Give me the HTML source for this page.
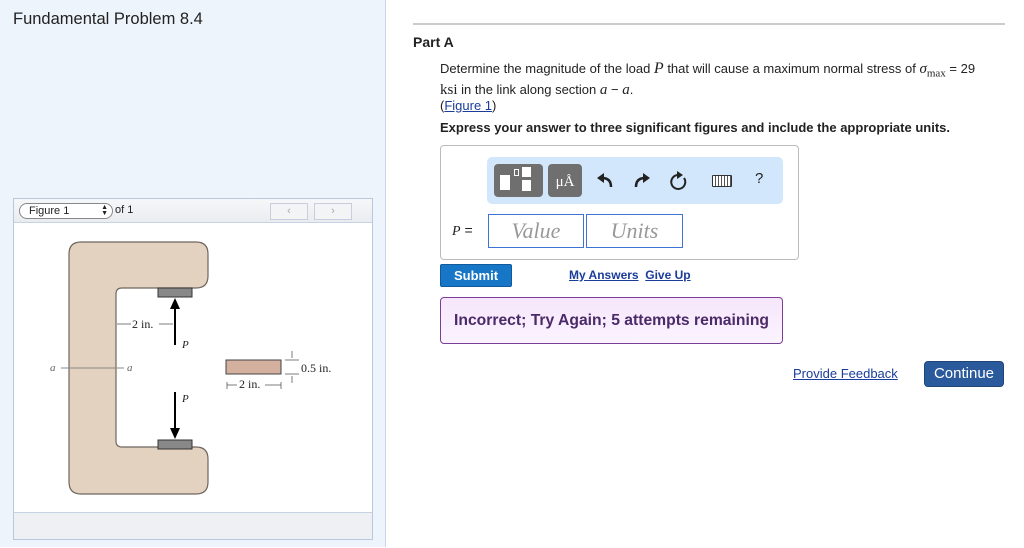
<!DOCTYPE html>
<html><head><meta charset="utf-8"><style>
*{margin:0;padding:0;box-sizing:border-box}
body{width:1024px;height:547px;overflow:hidden;background:#fff;font-family:"Liberation Sans",Arial,sans-serif;position:relative;color:#222}
.left{position:absolute;left:0;top:0;width:386px;height:547px;background:#eef4fc;border-right:1px solid #c8d6e8}
.abs{position:absolute}
a{color:#1a3c9a}
</style></head><body>
<div class="left">
  <div class="abs" style="left:13px;top:10px;font-size:16.5px;color:#222">Fundamental Problem 8.4</div>
  <div class="abs" style="left:13px;top:198px;width:360px;height:342px;border:1px solid #b9c9dd;background:#fff">
    <div class="abs" style="left:0;top:0;width:358px;height:24px;background:linear-gradient(#f6f7f9,#e9ecf0);border-bottom:1px solid #c6d3e2"></div>
    <div class="abs" style="left:5px;top:4px;width:94px;height:16px;border:1px solid #888;border-radius:8px;background:#fff;font-size:11px;padding-left:9px;line-height:14px">Figure 1<span style="position:absolute;right:4px;top:1px;font-size:7px;line-height:6px">&#9650;<br>&#9660;</span></div>
    <div class="abs" style="left:101px;top:5px;font-size:11px">of 1</div>
    <div class="abs" style="left:256px;top:4px;width:38px;height:17px;border:1px solid #ccd;background:#f3f4f6;color:#aaa;font-size:11px;text-align:center;line-height:15px">&lsaquo;</div>
    <div class="abs" style="left:300px;top:4px;width:38px;height:17px;border:1px solid #ccd;background:#f3f4f6;color:#aaa;font-size:11px;text-align:center;line-height:15px">&rsaquo;</div>
    <div class="abs" style="left:0;top:313px;width:358px;height:27px;background:#eef0f3;border-top:1px solid #c6d3e2"></div>
    <svg class="abs" style="left:-13px;top:-198px" width="386" height="547" viewBox="0 0 386 547">
      <path d="M80,241 H195 Q207,241 207,253 V275 Q207,287 195,287 H121 Q115,287 115,293 V440 Q115,446 121,446 H195 Q207,446 207,458 V481 Q207,493 195,493 H80 Q68,493 68,481 V253 Q68,241 80,241 Z" fill="#e2d2bf" stroke="#6e665e" stroke-width="1.2"/>
      <rect x="157" y="287" width="34" height="9" fill="#888" stroke="#333"/>
      <rect x="157" y="439" width="34" height="9" fill="#888" stroke="#333"/>
      <line x1="174" y1="344" x2="174" y2="305" stroke="#000" stroke-width="2"/>
      <path d="M169,308 L174,297 L179,308 Z" fill="#000"/>
      <line x1="174" y1="391" x2="174" y2="428" stroke="#000" stroke-width="2"/>
      <path d="M169,427 L174,438 L179,427 Z" fill="#000"/>
      <line x1="60" y1="367" x2="123" y2="367" stroke="#888"/>
      <line x1="116" y1="323" x2="130" y2="323" stroke="#444" stroke-width=".7"/>
      <line x1="158" y1="323" x2="172" y2="323" stroke="#444" stroke-width=".7"/>
      <rect x="225" y="359" width="55" height="14" fill="#d4b19f" stroke="#444"/>
      <line x1="226" y1="381" x2="226" y2="388" stroke="#444" stroke-width=".7"/>
      <line x1="280" y1="381" x2="280" y2="388" stroke="#444" stroke-width=".7"/>
      <line x1="226" y1="384" x2="236" y2="384" stroke="#444" stroke-width=".7"/>
      <line x1="264" y1="384" x2="280" y2="384" stroke="#444" stroke-width=".7"/>
      <line x1="284" y1="359" x2="298" y2="359" stroke="#444" stroke-width=".7"/>
      <line x1="284" y1="373" x2="298" y2="373" stroke="#444" stroke-width=".7"/>
      <line x1="291" y1="350" x2="291" y2="357" stroke="#444" stroke-width=".7"/>
      <line x1="291" y1="375" x2="291" y2="382" stroke="#444" stroke-width=".7"/>
      <g font-family="Liberation Serif,serif" font-size="12" fill="#222">
        <text x="131" y="327">2 in.</text>
        <text x="181" y="347" font-style="italic" font-size="11">P</text>
        <text x="181" y="401" font-style="italic" font-size="11">P</text>
        <text x="49" y="370" font-style="italic" font-size="11" fill="#666">a</text>
        <text x="126" y="370" font-style="italic" font-size="11" fill="#666">a</text>
        <text x="300" y="371">0.5 in.</text>
        <text x="238" y="387">2 in.</text>
      </g>
    </svg>
  </div>
</div>
<div class="abs" style="left:413px;top:23px;width:592px;height:2px;background:#ccc"></div>
<div class="abs" style="left:413px;top:34px;font-size:14px;font-weight:bold;color:#222">Part A</div>
<div class="abs" style="left:440px;top:61px;font-size:13px;line-height:16px;color:#222;width:580px">Determine the magnitude of the load <i style="font-family:'Liberation Serif',serif;font-size:16px">P</i> that will cause a maximum normal stress of <i style="font-family:'Liberation Serif',serif;font-size:15px">σ</i><sub style="font-family:'Liberation Serif',serif;font-size:11px">max</sub> = 29<br><span style="font-family:'Liberation Serif',serif;font-size:15px">ksi</span> in the link along section <i style="font-family:'Liberation Serif',serif;font-size:15px">a</i> − <i style="font-family:'Liberation Serif',serif;font-size:15px">a</i>.<br>(<a href="#">Figure 1</a>)</div>
<div class="abs" style="left:440px;top:120px;font-size:13px;font-weight:bold;color:#222">Express your answer to three significant figures and include the appropriate units.</div>
<div class="abs" style="left:440px;top:145px;width:359px;height:115px;border:1px solid #bbb;border-radius:4px"></div>
<div class="abs" style="left:487px;top:157px;width:296px;height:47px;background:#d2e6fc;border-radius:5px"></div>
<div class="abs" style="left:494px;top:164px;width:49px;height:33px;background:#6f6f6f;border-radius:4px"></div>
<div class="abs" style="left:500px;top:175px;width:10px;height:15px;background:#fff"></div>
<div class="abs" style="left:514px;top:169px;width:5px;height:7px;border:1px solid #fff"></div>
<div class="abs" style="left:522px;top:167px;width:9px;height:10px;background:#fff"></div>
<div class="abs" style="left:522px;top:180px;width:9px;height:11px;background:#fff"></div>
<div class="abs" style="left:548px;top:164px;width:34px;height:33px;background:#6f6f6f;border-radius:4px;color:#fff;font-family:'Liberation Serif',serif;font-size:15px;text-align:center;line-height:36px">μÅ</div>
<svg class="abs" style="left:595px;top:170px" width="100" height="22" viewBox="0 0 100 22">
  <path d="M16,17 Q16,8 7,8" fill="none" stroke="#222" stroke-width="2.5"/>
  <path d="M2,8 L9,3 L9,13 Z" fill="#222"/>
  <path d="M41,17 Q41,8 50,8" fill="none" stroke="#222" stroke-width="2.5"/>
  <path d="M55,8 L48,3 L48,13 Z" fill="#222"/>
  <path d="M83,5 A7,7 0 1 0 89,8" fill="none" stroke="#222" stroke-width="2"/>
  <path d="M82,1 L88,5 L82,9 Z" fill="#222"/>
</svg>
<div class="abs" style="left:712px;top:175px;width:20px;height:12px;border:1.5px solid #333;border-radius:1px;background:repeating-linear-gradient(90deg,#fff 0 2px,#555 2px 3px)"></div>
<div class="abs" style="left:755px;top:170px;font-size:15px;color:#222">?</div>
<div class="abs" style="left:452px;top:222px;font-size:14px"><i style="font-family:'Liberation Serif',serif">P</i> =</div>
<div class="abs" style="left:488px;top:214px;width:96px;height:34px;border:1px solid #3d74d6;font-family:'Liberation Serif',serif;font-style:italic;font-size:22px;color:#999;text-align:center;line-height:32px">Value</div>
<div class="abs" style="left:586px;top:214px;width:97px;height:34px;border:1px solid #3d74d6;font-family:'Liberation Serif',serif;font-style:italic;font-size:22px;color:#999;text-align:center;line-height:32px">Units</div>
<div class="abs" style="left:440px;top:264px;width:72px;height:23px;background:#1776c6;border:1px solid #0f5b9e;border-radius:2px;color:#fff;font-weight:bold;font-size:13px;text-align:center;line-height:21px">Submit</div>
<div class="abs" style="left:569px;top:268px;font-size:12px;font-weight:bold"><a href="#">My Answers</a>&nbsp;&nbsp;<a href="#">Give Up</a></div>
<div class="abs" style="left:440px;top:297px;width:343px;height:47px;border:1px solid #7b3e96;border-radius:4px;background:linear-gradient(#f6e6fb,#fbf3ff);color:#4a2a68;font-weight:bold;font-size:15.7px;padding-left:13px;line-height:45px;white-space:nowrap">Incorrect; Try Again; 5 attempts remaining</div>
<div class="abs" style="left:793px;top:366px;font-size:13px"><a href="#">Provide Feedback</a></div>
<div class="abs" style="left:924px;top:361px;width:80px;height:26px;background:#2b5a9c;border:1px solid #1e4478;border-radius:4px;color:#fff;font-size:15px;text-align:center;line-height:24px">Continue</div>
</body></html>
